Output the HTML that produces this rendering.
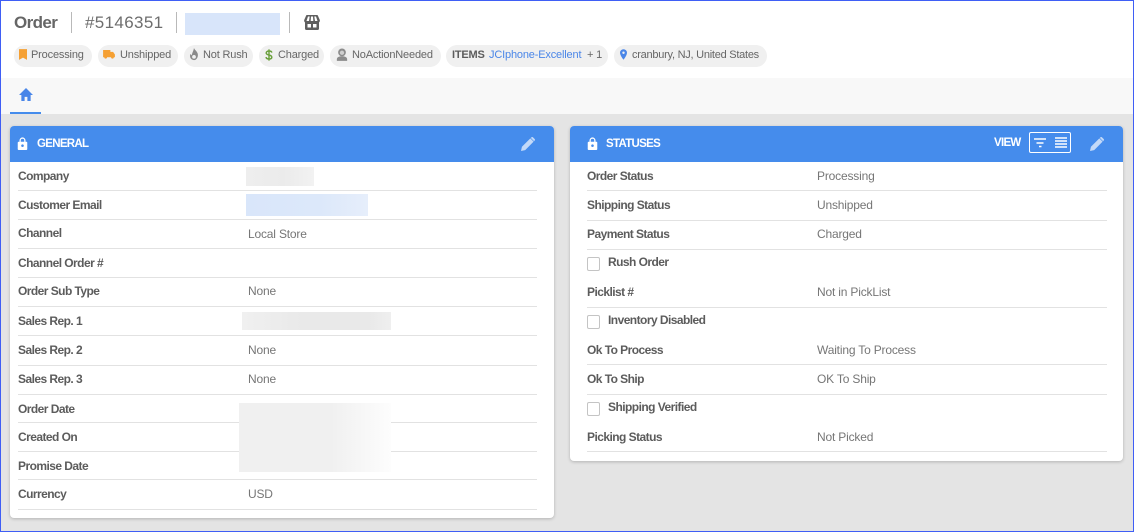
<!DOCTYPE html>
<html><head><meta charset="utf-8"><style>
*{box-sizing:border-box}
html,body{margin:0;padding:0}
body{width:1134px;height:532px;position:relative;overflow:hidden;background:#e4e4e4;font-family:"Liberation Sans",sans-serif}
#frame{position:absolute;inset:0;border:1px solid #3f5ef5;border-width:1px;z-index:9;pointer-events:none}
.abs,.l,.v,.ln,.chip,.cb,.t{position:absolute}
.l{font-size:12px;font-weight:700;color:#5c5c5c;line-height:14px;letter-spacing:-.55px;white-space:nowrap}
.v{font-size:12px;color:#767676;line-height:14px;white-space:nowrap;letter-spacing:-.18px}
.ln{height:1px;background:#e2e2e2}
.chip{top:45px;height:22px;border-radius:11px;background:#f0f0f0;font-size:11px;color:#666;line-height:21px;white-space:nowrap;letter-spacing:-.17px}
.chip span.t{top:0}
.chip svg{position:absolute}
.card{position:absolute;background:#fff;border-radius:4px;box-shadow:0 1px 3px rgba(0,0,0,.22)}
.hd{position:absolute;left:0;right:0;top:0;height:36px;background:#458cec;border-radius:4px 4px 0 0}
.ht{position:absolute;top:11px;color:#fff;font-size:11.5px;font-weight:700;line-height:14px;letter-spacing:-.7px}
.cb{width:13px;height:14px;border:1px solid #c4c4c4;border-radius:2px;background:#fff}
.sep{position:absolute;top:12px;width:1px;height:21px;background:#b9b9b9}
</style></head><body>
<div id="frame"></div>
<div class="abs" style="left:0;top:0;width:1134px;height:78px;background:#fff"></div>
<div class="abs" style="left:0;top:78px;width:1134px;height:36px;background:#f8f8f8"></div>

<div class="abs" style="left:14px;top:13px;font-size:17px;font-weight:700;color:#666;line-height:20px;letter-spacing:-.6px">Order</div>
<div class="sep" style="left:71px"></div>
<div class="abs" style="left:85px;top:13px;font-size:17px;color:#6d6d6d;line-height:20px;letter-spacing:.35px">#5146351</div>
<div class="sep" style="left:176px"></div>
<div class="abs" style="left:185px;top:13px;width:95px;height:22px;background:#d8e5fa"></div>
<div class="sep" style="left:289px"></div>
<svg class="abs" style="left:304px;top:15px" width="16" height="15" viewBox="0 0 16 15"><path d="M3 0h10a1 1 0 0 1 .9.600L15.800 5a2.600 2.600 0 0 1-.8 2.500V13.500a1.500 1.500 0 0 1-1.500 1.500h-11A1.500 1.500 0 0 1 1 13.500V7.500A2.600 2.600 0 0 1 .2 5L2.100.600A1 1 0 0 1 3 0z" fill="#5f5f5f"/><path d="M4 1.500h1.700L5 6H2.500zM7 1.500h2L9.300 6H6.700zM10.300 1.500H12L13.500 6H11z" fill="#fff"/><path d="M3.500 9h3.500v3.500H3.500zM9 9h3.500v3.500H9z" fill="#fff"/></svg>

<div class="chip" style="left:14px;width:78px"><svg style="left:5px;top:4px" width="8" height="11" viewBox="0 0 9 12"><path d="M0 0h9v12L4.500 9.500 0 12z" fill="#f5a033"/></svg><span class="t" style="left:17px">Processing</span></div>
<div class="chip" style="left:98px;width:80px"><svg style="left:5px;top:5px" width="12" height="10" viewBox="0 0 13 11"><path d="M0 0h8v2h3l2 3v3h-1.200a1.500 1.500 0 0 1-3 0H4.300a1.500 1.500 0 0 1-3 0H0z" fill="#f5a033"/></svg><span class="t" style="left:22px">Unshipped</span></div>
<div class="chip" style="left:184px;width:69px"><svg style="left:5px;top:3px" width="10" height="13" viewBox="0 0 10 14"><path d="M5 0c.5 2 3 3 4 6 .8 3-.8 7-4 7S0 10 1 6.500l1.500 1.500C3 5 4.500 3 5 0z" fill="#8a8a8a"/><circle cx="5" cy="9.500" r="2" fill="#f0f0f0"/></svg><span class="t" style="left:19px">Not Rush</span></div>
<div class="chip" style="left:259px;width:65px"><svg style="left:6px;top:3px" width="8" height="14" viewBox="0 0 10 15"><path d="M8.500 4.500C8.300 3 7 2.500 5 2.500S1.500 3.500 1.500 5 3 7 5 7.500s3.500 1 3.500 2.800S7 12.500 5 12.500s-3.500-.8-3.700-2.500M5 .5v14" fill="none" stroke="#6a9f3c" stroke-width="1.800"/></svg><span class="t" style="left:19px">Charged</span></div>
<div class="chip" style="left:330px;width:111px"><svg style="left:6px;top:2px" width="12" height="15" viewBox="0 0 14 15"><circle cx="7" cy="5" r="4.500" fill="#8c8c8c"/><circle cx="7" cy="5.500" r="2.500" fill="#cfcfcf"/><path d="M1 15v-2c0-2 2-3.500 6-3.500s6 1.500 6 3.500v2z" fill="#8c8c8c"/></svg><span class="t" style="left:22px">NoActionNeeded</span></div>
<div class="chip" style="left:446px;width:162px"><span class="t" style="left:6px;font-weight:700;color:#5c5c5c;letter-spacing:-.2px">ITEMS</span><span class="t" style="left:43px;color:#4a86e8">JCIphone-Excellent</span><span class="t" style="left:141px">+ 1</span></div>
<div class="chip" style="left:614px;width:153px"><svg style="left:6px;top:4px" width="7" height="11" viewBox="0 0 8 12"><path fill-rule="evenodd" d="M4 0a4 4 0 0 1 4 4c0 3-4 8-4 8S0 7 0 4a4 4 0 0 1 4-4zm0 2.600a1.400 1.400 0 1 0 0 2.800 1.400 1.400 0 0 0 0-2.800z" fill="#4a86e8"/></svg><span class="t" style="left:18px;letter-spacing:-.25px">cranbury, NJ, United States</span></div>

<svg class="abs" style="left:18px;top:88px" width="16" height="13" viewBox="0 0 16 14"><path d="M6.500 14V9.500h3V14h3.500V7.500h2.500L8 0 .5 7.500H3V14z" fill="#4a86e8"/></svg>
<div class="abs" style="left:10px;top:112px;width:31px;height:2px;background:#458cec"></div>

<div class="card" style="left:10px;top:126px;width:544px;height:392px">
<div class="hd"></div>
<svg class="abs" style="left:7px;top:11px" width="11" height="13" viewBox="0 0 12 15"><path fill-rule="evenodd" d="M2.500 5.500V4a3.500 3.500 0 0 1 7 0v1.500h1a1 1 0 0 1 1 1V14a1 1 0 0 1-1 1h-9a1 1 0 0 1-1-1V6.500a1 1 0 0 1 1-1zM4 5.500h4V4a2 2 0 0 0-4 0zM6 8.500a1.500 1.500 0 1 0 0 3 1.500 1.500 0 0 0 0-3z" fill="#fff"/></svg>
<div class="ht" style="left:27px">GENERAL</div>
<svg class="abs" style="left:511px;top:11px" width="14" height="14" viewBox="0 0 15 15"><path d="M0 15l1-4.500L10 1.500 13.500 5 4.500 14zM11 .5a1.400 1.400 0 0 1 2 0l1.500 1.500a1.400 1.400 0 0 1 0 2l-.5.500L10.500 1z" fill="#c3d9f8"/></svg>
</div>

<div class="abs" style="left:246px;top:167px;width:68px;height:19px;background:linear-gradient(90deg,#eeeeee,#ebebeb 55%,#f2f2f2)"></div>
<div class="abs" style="left:246px;top:194px;width:122px;height:22px;background:linear-gradient(90deg,#d9e6fa,#dce8fa 60%,#e6eefb)"></div>
<div class="abs" style="left:242px;top:312px;width:149px;height:18px;background:linear-gradient(90deg,#f0f0f0,#e9e9e9 40%,#e9e9e9 85%,#efefef)"></div>

<div class="ln" style="left:18px;top:190px;width:519px"></div>
<div class="ln" style="left:18px;top:219px;width:519px"></div>
<div class="ln" style="left:18px;top:248px;width:519px"></div>
<div class="ln" style="left:18px;top:277px;width:519px"></div>
<div class="ln" style="left:18px;top:306px;width:519px"></div>
<div class="ln" style="left:18px;top:335px;width:519px"></div>
<div class="ln" style="left:18px;top:365px;width:519px"></div>
<div class="ln" style="left:18px;top:394px;width:519px"></div>
<div class="ln" style="left:18px;top:422px;width:519px"></div>
<div class="ln" style="left:18px;top:451px;width:519px"></div>
<div class="ln" style="left:18px;top:479px;width:519px"></div>
<div class="ln" style="left:18px;top:509px;width:519px"></div>
<div class="abs" style="left:239px;top:403px;width:152px;height:69px;background:linear-gradient(90deg,#f0f0f0 0,#f0f0f0 60%,#fdfdfd 100%)"></div>

<div class="l" style="left:18px;top:169px">Company</div>
<div class="l" style="left:18px;top:198px">Customer Email</div>
<div class="l" style="left:18px;top:226px">Channel</div><div class="v" style="left:248px;top:227px">Local Store</div>
<div class="l" style="left:18px;top:256px">Channel Order #</div>
<div class="l" style="left:18px;top:284px">Order Sub Type</div><div class="v" style="left:248px;top:284px">None</div>
<div class="l" style="left:18px;top:314px">Sales Rep. 1</div>
<div class="l" style="left:18px;top:343px">Sales Rep. 2</div><div class="v" style="left:248px;top:343px">None</div>
<div class="l" style="left:18px;top:372px">Sales Rep. 3</div><div class="v" style="left:248px;top:372px">None</div>
<div class="l" style="left:18px;top:402px">Order Date</div>
<div class="l" style="left:18px;top:430px">Created On</div>
<div class="l" style="left:18px;top:459px">Promise Date</div>
<div class="l" style="left:18px;top:487px">Currency</div><div class="v" style="left:248px;top:487px">USD</div>

<div class="card" style="left:570px;top:126px;width:553px;height:335px">
<div class="hd"></div>
<svg class="abs" style="left:17px;top:11px" width="11" height="13" viewBox="0 0 12 15"><path fill-rule="evenodd" d="M2.500 5.500V4a3.500 3.500 0 0 1 7 0v1.500h1a1 1 0 0 1 1 1V14a1 1 0 0 1-1 1h-9a1 1 0 0 1-1-1V6.500a1 1 0 0 1 1-1zM4 5.500h4V4a2 2 0 0 0-4 0zM6 8.500a1.500 1.500 0 1 0 0 3 1.500 1.500 0 0 0 0-3z" fill="#fff"/></svg>
<div class="ht" style="left:36px">STATUSES</div>
<div class="ht" style="left:424px;top:10px">VIEW</div>
<div class="abs" style="left:459px;top:6px;width:42px;height:21px;border:1px solid #fff;border-radius:2px"></div>
<svg class="abs" style="left:464px;top:11px" width="33" height="11" viewBox="0 0 33 11"><path d="M0 2h12M2.500 6h7M5 9.500h2.500M21 1h12M21 4h12M21 7h12M21 10h12" stroke="#fff" stroke-width="1.500" fill="none"/></svg>
<svg class="abs" style="left:520px;top:11px" width="14" height="14" viewBox="0 0 15 15"><path d="M0 15l1-4.500L10 1.500 13.500 5 4.500 14zM11 .5a1.400 1.400 0 0 1 2 0l1.500 1.500a1.400 1.400 0 0 1 0 2l-.5.500L10.500 1z" fill="#c3d9f8"/></svg>
</div>

<div class="ln" style="left:587px;top:190px;width:520px"></div>
<div class="ln" style="left:587px;top:220px;width:520px"></div>
<div class="ln" style="left:587px;top:249px;width:520px"></div>
<div class="ln" style="left:587px;top:307px;width:520px"></div>
<div class="ln" style="left:587px;top:364px;width:520px"></div>
<div class="ln" style="left:587px;top:394px;width:520px"></div>
<div class="ln" style="left:587px;top:451px;width:520px"></div>

<div class="l" style="left:587px;top:169px">Order Status</div><div class="v" style="left:817px;top:169px">Processing</div>
<div class="l" style="left:587px;top:198px">Shipping Status</div><div class="v" style="left:817px;top:198px">Unshipped</div>
<div class="l" style="left:587px;top:227px">Payment Status</div><div class="v" style="left:817px;top:227px">Charged</div>
<div class="cb" style="left:587px;top:257px"></div><div class="l" style="left:608px;top:255px">Rush Order</div>
<div class="l" style="left:587px;top:285px">Picklist #</div><div class="v" style="left:817px;top:285px">Not in PickList</div>
<div class="cb" style="left:587px;top:315px"></div><div class="l" style="left:608px;top:313px">Inventory Disabled</div>
<div class="l" style="left:587px;top:343px">Ok To Process</div><div class="v" style="left:817px;top:343px">Waiting To Process</div>
<div class="l" style="left:587px;top:372px">Ok To Ship</div><div class="v" style="left:817px;top:372px">OK To Ship</div>
<div class="cb" style="left:587px;top:402px"></div><div class="l" style="left:608px;top:400px">Shipping Verified</div>
<div class="l" style="left:587px;top:430px">Picking Status</div><div class="v" style="left:817px;top:430px">Not Picked</div>
</body></html>
